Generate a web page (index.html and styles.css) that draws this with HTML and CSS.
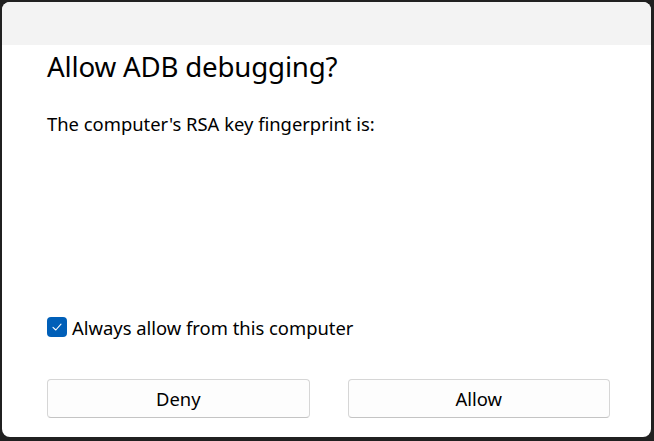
FILE: index.html
```html
<!DOCTYPE html>
<html>
<head>
<meta charset="utf-8">
<link rel="stylesheet" href="styles.css">
</head>
<body>
<div class="window">
  <div class="titlebar"></div>
  <div class="content">
    <h1 class="title">Allow ADB debugging?</h1>
    <p class="message">The computer's RSA key fingerprint is:</p>
    <div class="spacer"></div>
    <label class="check">
      <span class="box"><svg width="12" height="12" viewBox="0 0 12 12"><path d="M2 6.3 L4.8 9 L10 3.2" fill="none" stroke="#fff" stroke-width="1.1" stroke-linecap="round" stroke-linejoin="round"/></svg></span>
      <span class="check-label">Always allow from this computer</span>
    </label>
    <div class="buttons">
      <button class="btn">Deny</button>
      <button class="btn">Allow</button>
    </div>
  </div>
</div>
</body>
</html>
```
FILE: styles.css
```css
html, body {
  margin: 0;
  padding: 0;
  background: #202020;
  width: 654px;
  height: 441px;
  overflow: hidden;
}
body {
  padding: 2px 0 0 2px;
  box-sizing: border-box;
  font-family: "Noto Sans", "Open Sans", sans-serif;
}
.window {
  width: 649px;
  height: 435px;
  background: #ffffff;
  border-radius: 8px;
  overflow: hidden;
  display: flex;
  flex-direction: column;
}
.titlebar {
  height: 43px;
  background: #f3f3f3;
  flex: none;
}
.content {
  flex: 1;
  display: flex;
  flex-direction: column;
  padding: 0 41px 19px 45px;
}
.title {
  margin: 3px 0 0 0;
  font-size: 27.7px;
  font-weight: 400;
  line-height: 36px;
  color: #000;
  letter-spacing: -0.2px;
}
.message {
  margin: 28px 0 0 0;
  font-size: 18.4px;
  line-height: 24px;
  color: #000;
}
.spacer { flex: 1; }
.check {
  display: flex;
  align-items: center;
  gap: 5px;
  margin-bottom: 40px;
}
.box {
  width: 20px;
  height: 20px;
  border-radius: 4px;
  background: #005fb8;
  display: flex;
  align-items: center;
  justify-content: center;
  flex: none;
}
.check-label {
  font-size: 18.4px;
  line-height: 22px;
  color: #000;
  padding-top: 2px;
}
.buttons {
  display: flex;
  gap: 38px;
  padding-left: 0;
}
.btn {
  width: 263px;
  height: 39px;
  background: #fdfdfd;
  border: 1px solid #d6d6d6;
  border-bottom-color: #c4c4c4;
  border-radius: 4px;
  font-family: "Noto Sans", "Open Sans", sans-serif;
  font-size: 18.4px;
  color: #000;
  padding: 0;
}
```
